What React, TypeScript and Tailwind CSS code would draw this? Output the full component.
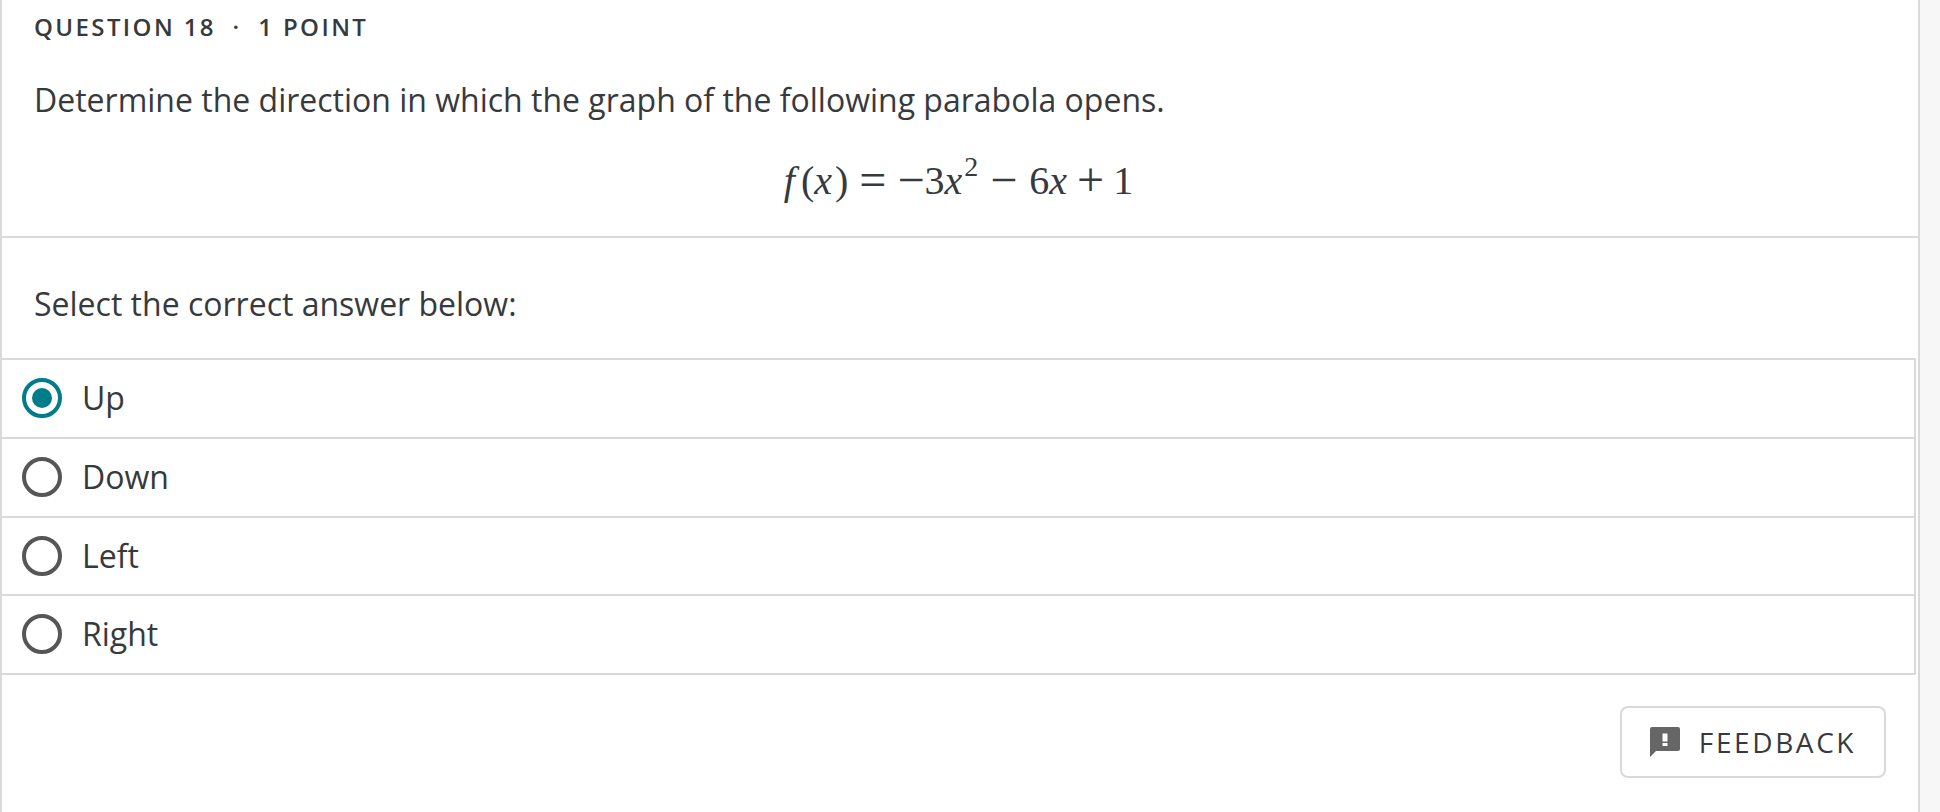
import React from "react";

const sans = "font-['Open_Sans','Noto_Sans',sans-serif]";

const options = ["Up", "Down", "Left", "Right"];

const Radio = ({ checked }: { checked: boolean }) => (
  <span
    className={`flex h-[40px] w-[40px] shrink-0 items-center justify-center rounded-full border-[4px] ${
      checked ? "border-[#007c8b]" : "border-[#565656]"
    }`}
  >
    {checked && <span className="h-[20px] w-[20px] rounded-full bg-[#007c8b]" />}
  </span>
);

export default function App() {
  return (
    <div className={`h-[812px] w-[1940px] overflow-hidden bg-[#f7f7f7] text-[#373a3c] ${sans}`}>
      <div className="h-full w-[1920px] border-x-2 border-[#d9d9d9] bg-white">
        <div className="h-[238px] border-b-2 border-[#d9d9d9] px-[32px] pt-[10px]">
          <div className="text-[24px] leading-[34px] font-semibold tracking-[2.4px]">
            QUESTION 18 <span className="mx-[8px]">·</span> 1 POINT
          </div>
          <p className="mt-[34px] text-[32px] leading-[44px]">
            Determine the direction in which the graph of the following parabola opens.
          </p>
          <div className="mt-[31px] flex justify-center pr-[3px] font-['Liberation_Serif',serif] text-[40px] leading-[56px]">
            <span className="whitespace-nowrap">
              <i>f</i>
              <span className="ml-[6px]">(</span>
              <i>x</i>
              <span className="ml-[3px]">)</span>
              <span className="mx-[11px] align-[-2px] text-[48px] leading-none">=</span>
              <span className="align-[-2px] text-[48px] leading-none">−</span>3<i>x</i>
              <sup className="top-[-0.65em] ml-[2px] text-[28px]">2</sup>
              <span className="mx-[12px] align-[-2px] text-[48px] leading-none">−</span>6<i>x</i>
              <span className="mr-[9px] ml-[10px] align-[-2px] text-[48px] leading-none">+</span>1
            </span>
          </div>
        </div>
        <div className="flex h-[120px] items-center px-[32px] pt-[12px] text-[32px]">Select the correct answer below:</div>
        <div className="mr-[2px] border-y-2 border-r-2 border-[#d9d9d9]">
          {options.map((o, i) => (
            <div
              key={o}
              className={`flex items-center gap-[20px] pb-[1px] pl-[20px] text-[32px] ${
                i > 0 ? "h-[78.7px] border-t-2 border-[#d9d9d9]" : "h-[77px]"
              }`}
            >
              <Radio checked={i === 0} />
              <span>{o}</span>
            </div>
          ))}
        </div>
        <div className="flex justify-end pt-[31px] pr-[32px]">
          <button className="flex h-[72px] w-[266px] items-center justify-center gap-[19px] rounded-[8px] border-2 border-[#d9d9d9] text-[28px] tracking-[2.6px]">
            <svg viewBox="0 0 30 30" className="h-[30px] w-[30px]" fill="#666666">
              <path
                d="M2 0h26a2 2 0 0 1 2 2v20a2 2 0 0 1-2 2H6l-6 6V2a2 2 0 0 1 2-2zm10.500 6.500v8h5v-8h-5zm0 9.500v3h5v-3h-5z"
                fillRule="evenodd"
              />
            </svg>
            FEEDBACK
          </button>
        </div>
      </div>
    </div>
  );
}
